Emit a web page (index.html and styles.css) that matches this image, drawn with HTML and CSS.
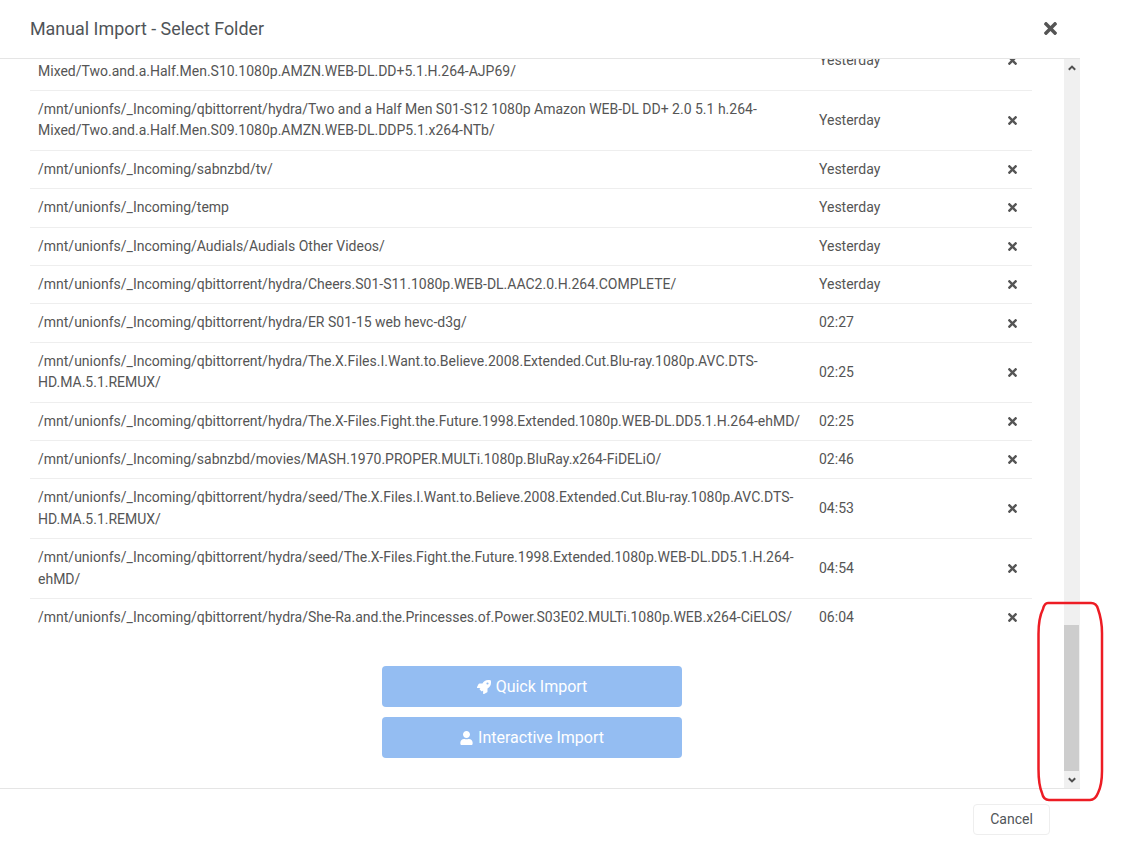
FILE: index.html
```html
<!DOCTYPE html>
<html lang="en">
<head>
<meta charset="utf-8">
<title>Manual Import - Select Folder</title>
<link rel="stylesheet" href="styles.css">
</head>
<body>
<svg class="defs" aria-hidden="true">
  <symbol id="times" viewBox="0 0 352 512"><path d="M242.72 256l100.07-100.07c12.28-12.28 12.28-32.19 0-44.48l-22.24-22.24c-12.28-12.28-32.19-12.28-44.48 0L176 189.28 75.93 89.21c-12.28-12.28-32.19-12.28-44.48 0L9.21 111.45c-12.28 12.28-12.28 32.19 0 44.48L109.28 256 9.21 356.07c-12.28 12.28-12.28 32.19 0 44.48l22.24 22.24c12.28 12.28 32.2 12.28 44.48 0L176 322.72l100.07 100.07c12.28 12.28 32.2 12.28 44.48 0l22.24-22.24c12.28-12.28 12.28-32.19 0-44.48L242.72 256z"/></symbol>
</svg>
<div class="modal">
  <header class="modal-header">
    <h1 class="modal-title">Manual Import - Select Folder</h1>
    <svg class="close-icon"><use href="#times"/></svg>
  </header>
  <div class="modal-body">
    <div class="content">
      <div class="folder-list">
        <div class="row"><div class="path">/mnt/unionfs/_Incoming/qbittorrent/hydra/Two and a Half Men S01-S12 1080p Amazon WEB-DL DD+ 2.0 5.1 h.264-Mixed/Two.and.a.Half.Men.S10.1080p.AMZN.WEB-DL.DD+5.1.H.264-AJP69/</div><div class="date">Yesterday</div><div class="remove"><svg class="x-icon"><use href="#times"/></svg></div></div>
        <div class="row"><div class="path">/mnt/unionfs/_Incoming/qbittorrent/hydra/Two and a Half Men S01-S12 1080p Amazon WEB-DL DD+ 2.0 5.1 h.264-Mixed/Two.and.a.Half.Men.S09.1080p.AMZN.WEB-DL.DDP5.1.x264-NTb/</div><div class="date">Yesterday</div><div class="remove"><svg class="x-icon"><use href="#times"/></svg></div></div>
        <div class="row"><div class="path">/mnt/unionfs/_Incoming/sabnzbd/tv/</div><div class="date">Yesterday</div><div class="remove"><svg class="x-icon"><use href="#times"/></svg></div></div>
        <div class="row"><div class="path">/mnt/unionfs/_Incoming/temp</div><div class="date">Yesterday</div><div class="remove"><svg class="x-icon"><use href="#times"/></svg></div></div>
        <div class="row"><div class="path">/mnt/unionfs/_Incoming/Audials/Audials Other Videos/</div><div class="date">Yesterday</div><div class="remove"><svg class="x-icon"><use href="#times"/></svg></div></div>
        <div class="row"><div class="path">/mnt/unionfs/_Incoming/qbittorrent/hydra/Cheers.S01-S11.1080p.WEB-DL.AAC2.0.H.264.COMPLETE/</div><div class="date">Yesterday</div><div class="remove"><svg class="x-icon"><use href="#times"/></svg></div></div>
        <div class="row"><div class="path">/mnt/unionfs/_Incoming/qbittorrent/hydra/ER S01-15 web hevc-d3g/</div><div class="date">02:27</div><div class="remove"><svg class="x-icon"><use href="#times"/></svg></div></div>
        <div class="row"><div class="path">/mnt/unionfs/_Incoming/qbittorrent/hydra/The.X.Files.I.Want.to.Believe.2008.Extended.Cut.Blu-ray.1080p.AVC.DTS-HD.MA.5.1.REMUX/</div><div class="date">02:25</div><div class="remove"><svg class="x-icon"><use href="#times"/></svg></div></div>
        <div class="row"><div class="path">/mnt/unionfs/_Incoming/qbittorrent/hydra/The.X-Files.Fight.the.Future.1998.Extended.1080p.WEB-DL.DD5.1.H.264-ehMD/</div><div class="date">02:25</div><div class="remove"><svg class="x-icon"><use href="#times"/></svg></div></div>
        <div class="row"><div class="path">/mnt/unionfs/_Incoming/sabnzbd/movies/MASH.1970.PROPER.MULTi.1080p.BluRay.x264-FiDELiO/</div><div class="date">02:46</div><div class="remove"><svg class="x-icon"><use href="#times"/></svg></div></div>
        <div class="row"><div class="path">/mnt/unionfs/_Incoming/qbittorrent/hydra/seed/The.X.Files.I.Want.to.Believe.2008.Extended.Cut.Blu-ray.1080p.AVC.DTS-HD.MA.5.1.REMUX/</div><div class="date">04:53</div><div class="remove"><svg class="x-icon"><use href="#times"/></svg></div></div>
        <div class="row"><div class="path">/mnt/unionfs/_Incoming/qbittorrent/hydra/seed/The.X-Files.Fight.the.Future.1998.Extended.1080p.WEB-DL.DD5.1.H.264-ehMD/</div><div class="date">04:54</div><div class="remove"><svg class="x-icon"><use href="#times"/></svg></div></div>
        <div class="row"><div class="path">/mnt/unionfs/_Incoming/qbittorrent/hydra/She-Ra.and.the.Princesses.of.Power.S03E02.MULTi.1080p.WEB.x264-CiELOS/</div><div class="date">06:04</div><div class="remove"><svg class="x-icon"><use href="#times"/></svg></div></div>
      </div>
      <div class="actions">
        <button class="import-btn" type="button"><svg class="btn-icon" viewBox="0 0 512 512"><path d="M505.05 19.1a15.89 15.89 0 0 0-12.2-12.2C460.65 0 435.46 0 410.36 0c-103.2 0-165.1 55.2-211.29 128H94.87A48 48 0 0 0 52 154.49l-49.42 98.8A24 24 0 0 0 24.07 288h103.77l-22.47 22.47a32 32 0 0 0 0 45.25l50.9 50.91a32 32 0 0 0 45.26 0L224 384.16V488a24 24 0 0 0 34.7 21.49l98.7-49.39a47.91 47.91 0 0 0 26.5-42.9V312.79c72.59-46.3 128-108.4 128-211.09.1-25.2.1-50.4-6.85-82.6zM384 168a40 40 0 1 1 40-40 40 40 0 0 1-40 40z"/></svg>Quick Import</button>
        <button class="import-btn" type="button"><svg class="btn-icon user-icon" viewBox="0 0 448 512"><path d="M224 256c70.7 0 128-57.3 128-128S294.7 0 224 0 96 57.3 96 128s57.3 128 128 128zm89.6 32h-16.7c-22.2 10.2-46.9 16-72.9 16s-50.6-5.8-72.9-16h-16.7C60.2 288 0 348.2 0 422.4V464c0 26.5 21.5 48 48 48h352c26.5 0 48-21.5 48-48v-41.6c0-74.2-60.2-134.4-134.4-134.4z"/></svg>Interactive Import</button>
      </div>
    </div>
    <div class="scrollbar">
      <div class="sb-btn"><svg class="sb-arrow" viewBox="0 0 8 6"><path d="M.8 4.8 4 1.6l3.2 3.2"/></svg></div>
      <div class="sb-space"></div>
      <div class="sb-thumb"></div>
      <div class="sb-btn"><svg class="sb-arrow" viewBox="0 0 8 6"><path d="M.8 1.2 4 4.4l3.2-3.2"/></svg></div>
    </div>
  </div>
  <footer class="modal-footer">
    <button class="cancel-btn" type="button">Cancel</button>
  </footer>
</div>
<svg class="annotation" viewBox="0 0 70 204" aria-hidden="true"><path d="M11 3H54C58 3 60 5 61 9C63.500 16 65 24 65 33V171C65 180 63.500 188 61 193C59 198 57 200 53 200H12C8 200 6 198 5 193C2 186 1.500 178 1.500 169V34C1.500 24 3 15 6 9C7 5 8 3 11 3Z"/></svg>
</body>
</html>
```

FILE: styles.css
```css
* {
  box-sizing: border-box;
}

html,
body {
  margin: 0;
  height: 100%;
  background: #fff;
  overflow: hidden;
}

body {
  position: relative;
  font-family: Roboto, "Liberation Sans", sans-serif;
  font-size: 14px;
  color: #555;
}

.defs {
  display: none;
}

.modal {
  width: 1080px;
  height: 850px;
  display: flex;
  flex-direction: column;
}

.modal-header {
  flex: 0 0 59px;
  display: flex;
  align-items: center;
  justify-content: space-between;
  padding: 0 23px 2px 30px;
  border-bottom: 1px solid #e5e5e5;
}

.modal-title {
  margin: 0;
  padding-top: 2px;
  font-size: 17.9px;
  font-weight: 400;
  line-height: 1.2;
  color: #505458;
}

.close-icon {
  width: 13px;
  height: 19px;
  fill: #555;
}

.modal-body {
  flex: 1;
  min-height: 0;
  display: flex;
  overflow: hidden;
}

.content {
  flex: 1;
  min-width: 0;
  padding: 0 32px 0 30px;
}

.folder-list {
  margin-top: -27.8px;
}

.row {
  display: grid;
  grid-template-columns: 781px 1fr 40px;
  align-items: center;
  padding: 8px 0;
  line-height: 21.4px;
  border-bottom: 1px solid #eee;
}

.row:last-child {
  border-bottom: 0;
}

.path {
  padding: 0 8px;
}

.date {
  padding: 0 8px;
}

.remove {
  display: flex;
  justify-content: center;
}

.x-icon {
  width: 9px;
  height: 13px;
  fill: #555;
}

.actions {
  margin-top: 29.6px;
  padding-left: 2px;
  display: flex;
  flex-direction: column;
  align-items: center;
  gap: 10px;
}

.import-btn {
  width: 300px;
  height: 41px;
  display: flex;
  align-items: center;
  justify-content: center;
  gap: 5px;
  border: 0;
  border-radius: 4px;
  background: #94bdf2;
  color: #fff;
  font-family: inherit;
  font-size: 16px;
}

.btn-icon {
  width: 14px;
  height: 14px;
  fill: #fff;
}

.user-icon {
  width: 13px;
}

.scrollbar {
  flex: 0 0 16px;
  display: flex;
  flex-direction: column;
  background: #f0f0f0;
}

.sb-btn {
  flex: 0 0 17px;
  display: flex;
  align-items: center;
  justify-content: center;
}

.sb-arrow {
  width: 8px;
  height: 6px;
  fill: none;
  stroke: #505050;
  stroke-width: 2;
}

.sb-space {
  flex: 1;
}

.sb-thumb {
  flex: 0 0 146px;
  width: 15px;
  background: #cdcdcd;
}

.modal-footer {
  flex: 0 0 62px;
  display: flex;
  justify-content: flex-end;
  align-items: flex-start;
  padding: 15px 30px 0 0;
  border-top: 1px solid #e5e5e5;
}

.cancel-btn {
  width: 77px;
  height: 31px;
  padding: 0 0 2px;
  border: 1px solid #eee;
  border-radius: 4px;
  background: #fff;
  color: #505458;
  font-family: inherit;
  font-size: 14px;
}

.annotation {
  position: absolute;
  left: 1037px;
  top: 600px;
  width: 70px;
  height: 204px;
  fill: none;
  stroke: #ed1c24;
  stroke-width: 2.5;
}
```
